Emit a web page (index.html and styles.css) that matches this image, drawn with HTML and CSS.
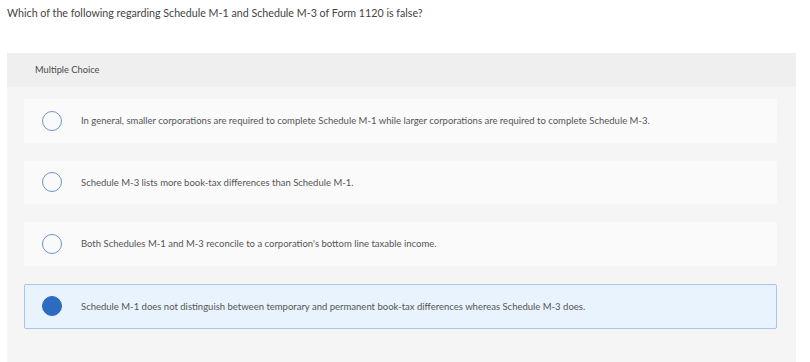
FILE: index.html
```html
<!DOCTYPE html>
<html lang="en">
<head>
  <meta charset="UTF-8">
  <meta name="viewport" content="width=device-width, initial-scale=1.0">
  <title>Multiple Choice</title>
  <link rel="stylesheet" href="styles.css">
</head>
<body>

  <p class="question">Which of the following regarding Schedule M-1 and Schedule M-3 of Form 1120 is false?</p>

  <div class="panel">
    <div class="panel-header">Multiple Choice</div>

    <div class="options">
      <label class="option">
        <span class="radio"></span>
        <span class="option-text">In general, smaller corporations are required to complete Schedule M-1 while larger corporations are required to complete Schedule M-3.</span>
      </label>
      <label class="option">
        <span class="radio"></span>
        <span class="option-text">Schedule M-3 lists more book-tax differences than Schedule M-1.</span>
      </label>
      <label class="option">
        <span class="radio"></span>
        <span class="option-text">Both Schedules M-1 and M-3 reconcile to a corporation's bottom line taxable income.</span>
      </label>
      <label class="option selected">
        <span class="radio"></span>
        <span class="option-text">Schedule M-1 does not distinguish between temporary and permanent book-tax differences whereas Schedule M-3 does.</span>
      </label>
    </div>
  </div>

</body>
</html>
```

FILE: styles.css
```css
body {
  font-family: Lato, "Open Sans", sans-serif;
  background-color: #ffffff;
  margin: 0;
  color: #444;
}

.question {
  margin: 0;
  padding: 6px 7px 0;
  font-size: 10.7px;
  line-height: 14px;
  color: #444;
}

.panel {
  margin: 33px 14px 0 7px;
  background: #f5f5f5;
  padding-bottom: 40px;
}

.panel-header {
  background: #efefef;
  height: 34px;
  line-height: 34px;
  padding-left: 28px;
  font-size: 9.3px;
  color: #4a4a4a;
}

.options {
  display: flex;
  flex-direction: column;
  gap: 18px;
  padding: 12px 19px 0 17px;
}

.option {
  display: flex;
  align-items: center;
  height: 43.5px;
  background: #fafafa;
  box-sizing: border-box;
  padding-left: 18px;
}

.radio {
  width: 20px;
  height: 20px;
  border: 1.5px solid #6a96cb;
  border-radius: 50%;
  box-sizing: border-box;
  flex-shrink: 0;
}

.option-text {
  margin-left: 19px;
  font-size: 9.5px;
  color: #555;
}

.option.selected {
  height: 45px;
  background: #e9f3fd;
  border: 1px solid #a6c6ea;
  border-radius: 2px;
  padding-left: 17px;
}

.option.selected .radio {
  background: #2c6cc0;
  border-color: #2c6cc0;
}
```
